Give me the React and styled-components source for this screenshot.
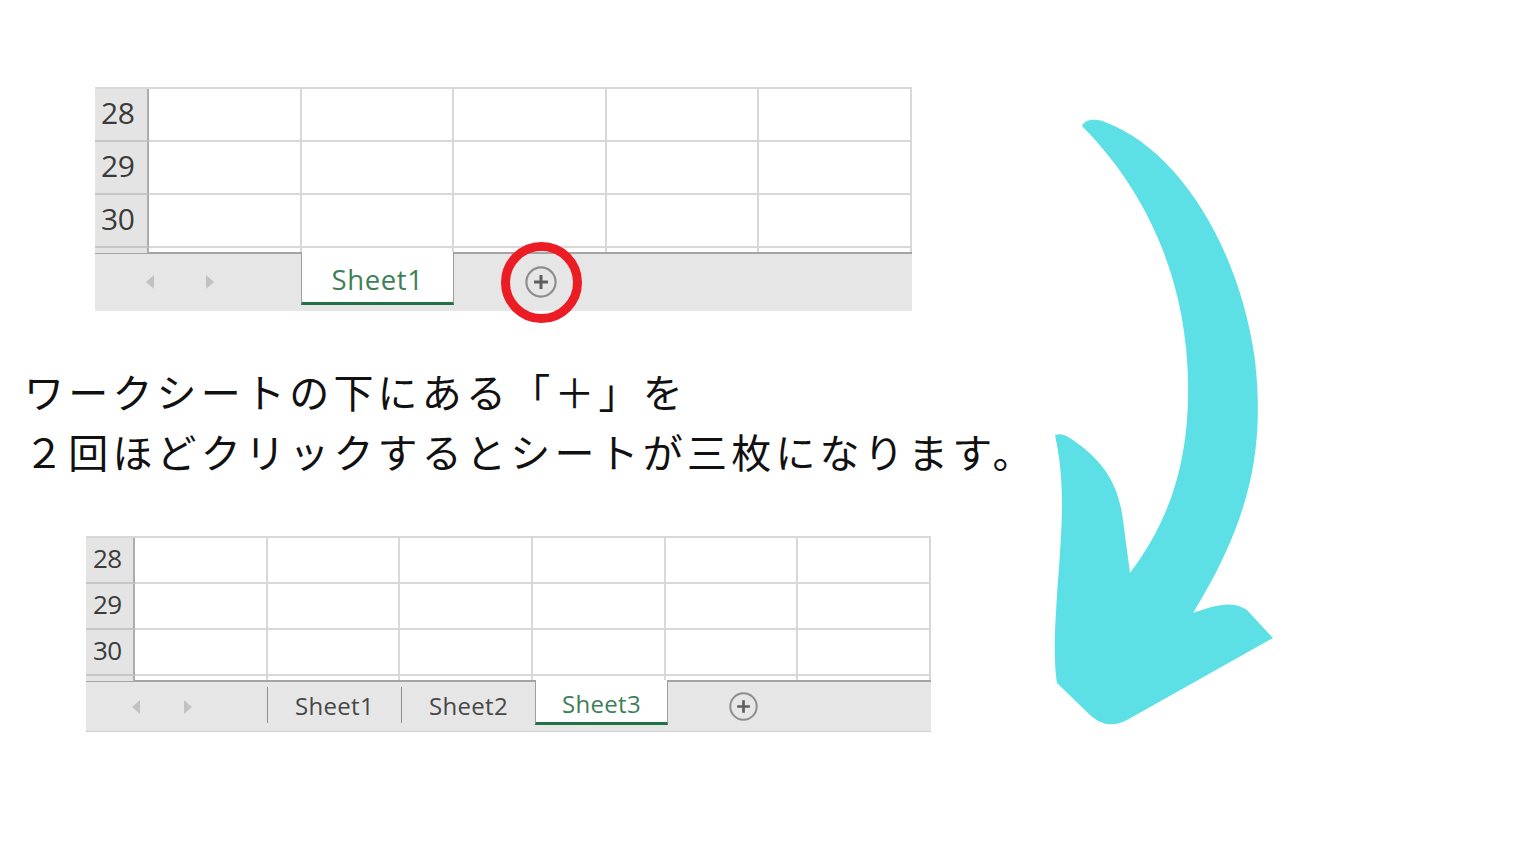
import styled, { createGlobalStyle } from 'styled-components'

const GlobalStyle = createGlobalStyle`
	*, *::before, *::after {
		box-sizing: border-box;
	}
	body {
		margin: 0;
		background: #ffffff;
	}
`

const Page = styled.div`
	width: 1536px;
	height: 864px;
	display: flex;
	overflow: hidden;
	background: #ffffff;
`

const LeftCol = styled.div`
	width: 1040px;
	padding-top: 87px;
	display: flex;
	flex-direction: column;
	align-items: flex-start;
`

const SheetFrame = styled.div`
	margin-left: ${props => props.$left}px;
	width: ${props => props.$width}px;
	font-family: 'Open Sans', 'Noto Sans', sans-serif;
`

const Grid = styled.div`
	display: grid;
	grid-template-columns: ${props => props.$hw}px repeat(${props => props.$cols}, 1fr);
	grid-template-rows: repeat(3, ${props => props.$rh}px) ${props => props.$strip}px;
	border-top: 2px solid #d8d8d8;
`

const RowHead = styled.div`
	background: #e4e4e4;
	border-right: 2px solid #acacac;
	border-bottom: ${props => props.$strip ? 'none' : '2px solid #c6c6c6'};
	color: #3b3b3b;
	font-size: ${props => props.$fs}px;
	display: flex;
	align-items: center;
	padding-left: ${props => props.$pad}px;
	padding-bottom: 5px;
	letter-spacing: -0.5px;
`

const Cell = styled.div`
	border-right: 2px solid #d8d8d8;
	border-bottom: ${props => props.$strip ? 'none' : '2px solid #d8d8d8'};
`

const TabBar = styled.div`
	height: ${props => props.$h}px;
	background: #e6e6e6;
	border-top: 2px solid #a4a4a4;
	border-bottom: 1px solid ${props => props.$edge ? '#cdcdcd' : '#e6e6e6'};
	display: flex;
	align-items: flex-start;
`

const NavArea = styled.div`
	width: ${props => props.$w}px;
	height: 100%;
	display: flex;
	align-items: center;
	padding-left: ${props => props.$pad}px;
	gap: ${props => props.$gap}px;
`

const NavArrow = styled.span`
	width: 0;
	height: 0;
	border-top: 7px solid transparent;
	border-bottom: 7px solid transparent;
	border-right: ${props => props.$dir === 'left' ? '8px solid #c2c2c2' : '0'};
	border-left: ${props => props.$dir === 'right' ? '8px solid #c2c2c2' : '0'};
`

const Separator = styled.span`
	width: 1px;
	height: 36px;
	margin-top: 5px;
	background: #8e8e8e;
`

const Tab = styled.div`
	width: ${props => props.$w}px;
	height: ${props => props.$h}px;
	margin-top: ${props => props.$active ? '-2px' : '5px'};
	padding-top: ${props => props.$active ? props.$nudge : 0}px;
	display: flex;
	align-items: center;
	justify-content: center;
	font-size: ${props => props.$fs}px;
	letter-spacing: ${props => props.$ls}px;
	color: ${props => props.$active ? '#3e7f56' : '#474747'};
	background: ${props => props.$active ? '#ffffff' : 'transparent'};
	border-left: 1px solid ${props => props.$active ? '#9e9e9e' : 'transparent'};
	border-right: 1px solid ${props => props.$active ? '#9e9e9e' : 'transparent'};
	border-bottom: ${props => props.$active ? '3px solid #217346' : 'none'};
`

const PlusButton = styled.div`
	position: relative;
	width: ${props => props.$d}px;
	height: ${props => props.$d}px;
	margin-left: ${props => props.$ml}px;
	align-self: center;
	display: flex;
`

const RedRing = styled.span`
	position: absolute;
	left: 50%;
	top: 50%;
	width: 81px;
	height: 81px;
	margin: -40.5px 0 0 -40.5px;
	border: 9px solid #ec1c24;
	border-radius: 50%;
`

const Caption = styled.p`
	margin: 50px 0 55px;
	padding-left: 24px;
	font-family: 'Noto Sans CJK JP', 'Noto Sans', sans-serif;
	font-size: 40px;
	font-weight: 400;
	line-height: 60px;
	letter-spacing: 4.2px;
	color: #111111;
	white-space: nowrap;
`

const ArrowArt = styled.svg`
	margin-top: 100px;
	flex-shrink: 0;
`

const PlusIcon = ({ d }) => (
	<svg width={d} height={d} viewBox="0 0 32 32">
		<circle cx="16" cy="16" r="14.6" fill="none" stroke="#8d8d8d" strokeWidth="2.2" />
		<path d="M9 16H23M16 9V23" stroke="#5f5f5f" strokeWidth="3" />
	</svg>
)

const Sheet = ({ left, width, hw, cols, rh, strip, fs, pad, bar, children }) => {
	const rows = ['28', '29', '30']
	return (
		<SheetFrame $left={left} $width={width}>
			<Grid $hw={hw} $cols={cols} $rh={rh} $strip={strip}>
				{rows.map(num => [
					<RowHead key={num} $fs={fs} $pad={pad}>{num}</RowHead>,
					...Array.from({ length: cols }).map((_, i) => <Cell key={num + '-' + i} />)
				])}
				<RowHead $strip />
				{Array.from({ length: cols }).map((_, i) => <Cell key={'s' + i} $strip />)}
			</Grid>
			<TabBar $h={bar.h} $edge={bar.edge}>
				{children}
			</TabBar>
		</SheetFrame>
	)
}

const App = () => {
	return (
		<>
			<GlobalStyle />
			<Page>
				<LeftCol>
					<Sheet
						left={95}
						width={817}
						hw={54}
						cols={5}
						rh={53}
						strip={4}
						fs={30}
						pad={6}
						bar={{ h: 59 }}
					>
						<NavArea $w={206} $pad={51} $gap={52}>
							<NavArrow $dir="left" />
							<NavArrow $dir="right" />
						</NavArea>
						<Tab $active $w={153} $h={53} $fs={27.5} $ls={0.6} $nudge={5}>Sheet1</Tab>
						<PlusButton $d={32} $ml={71}>
							<PlusIcon d={32} />
							<RedRing />
						</PlusButton>
					</Sheet>

					<Caption>
						ワークシートの下にある「＋」を
						<br />
						２回ほどクリックするとシートが三枚になります。
					</Caption>

					<Sheet
						left={86}
						width={845}
						hw={49}
						cols={6}
						rh={46}
						strip={4}
						fs={26}
						pad={7}
						bar={{ h: 52, edge: true }}
					>
						<NavArea $w={181} $pad={46} $gap={44}>
							<NavArrow $dir="left" />
							<NavArrow $dir="right" />
						</NavArea>
						<Separator />
						<Tab $w={133} $h={36} $fs={24} $ls={0.3}>Sheet1</Tab>
						<Separator />
						<Tab $w={133} $h={36} $fs={24} $ls={0.3}>Sheet2</Tab>
						<Tab $active $w={133} $h={45} $fs={24} $ls={0.3} $nudge={4}>Sheet3</Tab>
						<PlusButton $d={29} $ml={61}>
							<PlusIcon d={29} />
						</PlusButton>
					</Sheet>
				</LeftCol>

				<ArrowArt width="250" height="640" viewBox="1040 100 250 640">
					<path
						fill="#5ce0e6"
						d="M1082,126 C1085,119 1095,118 1105,122 C1180,150 1240,250 1255,360 C1265,450 1250,520 1193,613 C1215,605 1232,600 1247,610 L1273,638 L1127,720 C1112,728 1100,724 1090,715 L1057,683 C1050,640 1062,560 1062,503 C1062,470 1058,450 1055,435 C1060,433 1065,435 1070,438 C1100,458 1118,480 1123,520 L1130,573 C1170,520 1190,460 1188,380 C1186,290 1155,200 1082,126 Z"
					/>
				</ArrowArt>
			</Page>
		</>
	)
}

export default App
